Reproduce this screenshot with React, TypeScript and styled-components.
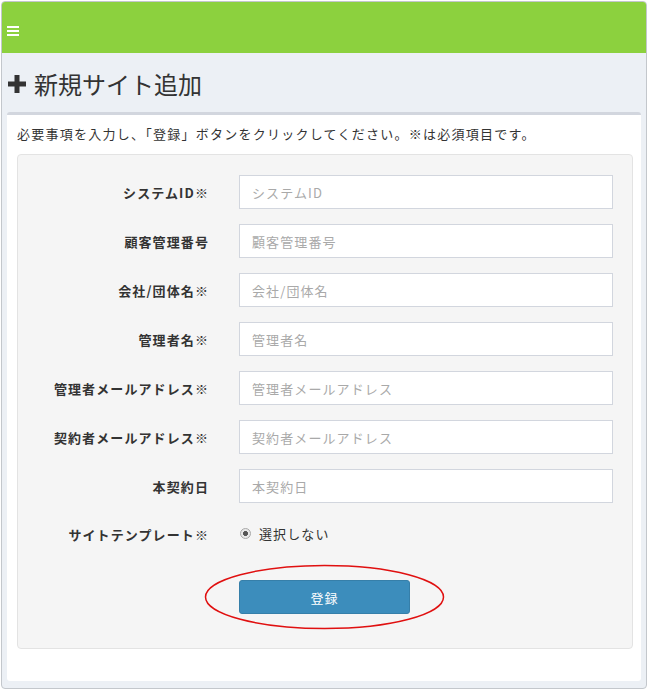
import React from "react";
import styled, { createGlobalStyle } from "styled-components";

const Global = createGlobalStyle`
  html, body { margin: 0; padding: 0; background: #ffffff; }
  body { font-family: "Noto Sans CJK JP", "Noto Sans", sans-serif; color: #333; }
  * { box-sizing: border-box; }
`;

const Frame = styled.div`
  margin: 1px 2px 1px 1px;
  height: 688px;
  border: 1px solid #c3c7cc;
  border-radius: 4px;
  overflow: hidden;
  background: #ecf0f5;
  display: flex;
  flex-direction: column;
`;

const Header = styled.header`
  height: 51px;
  background: #8cd13e;
  display: flex;
  align-items: center;
  padding-left: 5px;
  flex-shrink: 0;
`;

const Burger = styled.span`
  display: flex;
  flex-direction: column;
  gap: 2px;
  width: 12px;
  margin-top: 6px;
  & > i { display: block; height: 2px; background: #fff; }
`;

const Content = styled.main`
  flex: 1;
  display: flex;
  flex-direction: column;
  padding: 0 5px 7px 5px;
`;

const TitleRow = styled.h1`
  margin: 0;
  height: 59px;
  display: flex;
  align-items: center;
  gap: 8px;
  padding-left: 1px;
  font-size: 24px;
  font-weight: 400;
  color: #333;
  padding-top: 2px;
`;

const Panel = styled.section`
  flex: 1;
  background: #fff;
  border-top: 3px solid #d2d6de;
  border-radius: 3px;
  padding: 9px 8px 32px 10px;
  display: flex;
  flex-direction: column;
`;

const Intro = styled.p`
  margin: 0 0 10px 0;
  font-size: 13px;
  line-height: 20px;
  letter-spacing: 1.25px;
  color: #333;
`;

const Well = styled.div`
  background: #f5f5f5;
  border: 1px solid #e3e3e3;
  border-radius: 4px;
  padding: 20px 19px 34px 19px;
  display: grid;
  grid-template-columns: 171px 1fr;
  column-gap: 31px;
  row-gap: 15px;
  align-items: center;
`;

const Label = styled.label`
  text-align: right;
  font-size: 13px;
  font-weight: 700;
  letter-spacing: 1.1px;
  margin-right: -1px;
  color: #333;
`;

const Input = styled.input`
  height: 34px;
  width: 100%;
  border: 1px solid #d2d6de;
  background: #fff;
  padding: 0 12px;
  font-size: 13px;
  font-family: inherit;
  letter-spacing: 1.1px;
  color: #555;
  outline: none;
  &::placeholder { color: #a9a9a9; }
`;

const RadioWrap = styled.div`
  height: 34px;
  display: flex;
  align-items: center;
  gap: 8px;
  padding-left: 1px;
  margin-top: -2px;
  font-size: 13px;
  letter-spacing: 1.1px;
  color: #333;
`;

const RadioDot = styled.span`
  width: 11px;
  height: 11px;
  border-radius: 50%;
  border: 1px solid #a8a8a8;
  background: radial-gradient(circle, #555 0 2.2px, #e8e8e8 2.8px);
  display: inline-block;
`;

const ButtonCell = styled.div`
  grid-column: 2;
  margin-top: 15px;
  position: relative;
  width: 171px;
`;

const Submit = styled.button`
  width: 171px;
  height: 34px;
  background: #3c8dbc;
  border: 1px solid #367fa9;
  border-radius: 3px;
  color: #fff;
  font-size: 13px;
  font-family: inherit;
  letter-spacing: 1px;
`;

const Ellipse = styled.svg`
  position: absolute;
  left: -36px;
  top: -16px;
  pointer-events: none;
  overflow: visible;
`;

const fields = [
  { label: "システムID※", ph: "システムID" },
  { label: "顧客管理番号", ph: "顧客管理番号" },
  { label: "会社/団体名※", ph: "会社/団体名" },
  { label: "管理者名※", ph: "管理者名" },
  { label: "管理者メールアドレス※", ph: "管理者メールアドレス" },
  { label: "契約者メールアドレス※", ph: "契約者メールアドレス" },
  { label: "本契約日", ph: "本契約日" },
];

export default function App() {
  return (
    <>
      <Global />
      <Frame>
        <Header>
          <Burger>
            <i />
            <i />
            <i />
          </Burger>
        </Header>
        <Content>
          <TitleRow>
            <svg width="18" height="18" viewBox="0 0 18 18">
              <path d="M6.5 0h5v6.5H18v5h-6.5V18h-5v-6.5H0v-5h6.5z" fill="#333" />
            </svg>
            新規サイト追加
          </TitleRow>
          <Panel>
            <Intro>必要事項を入力し、「登録」ボタンをクリックしてください。※は必須項目です。</Intro>
            <Well>
              {fields.map((f) => (
                <React.Fragment key={f.label}>
                  <Label>{f.label}</Label>
                  <Input placeholder={f.ph} />
                </React.Fragment>
              ))}
              <Label>サイトテンプレート※</Label>
              <RadioWrap>
                <RadioDot />
                選択しない
              </RadioWrap>
              <ButtonCell>
                <Submit>登録</Submit>
                <Ellipse width="243" height="66">
                  <ellipse cx="121.5" cy="33" rx="119" ry="31.5" fill="none" stroke="#e01010" strokeWidth="1.5" />
                </Ellipse>
              </ButtonCell>
            </Well>
          </Panel>
        </Content>
      </Frame>
    </>
  );
}
